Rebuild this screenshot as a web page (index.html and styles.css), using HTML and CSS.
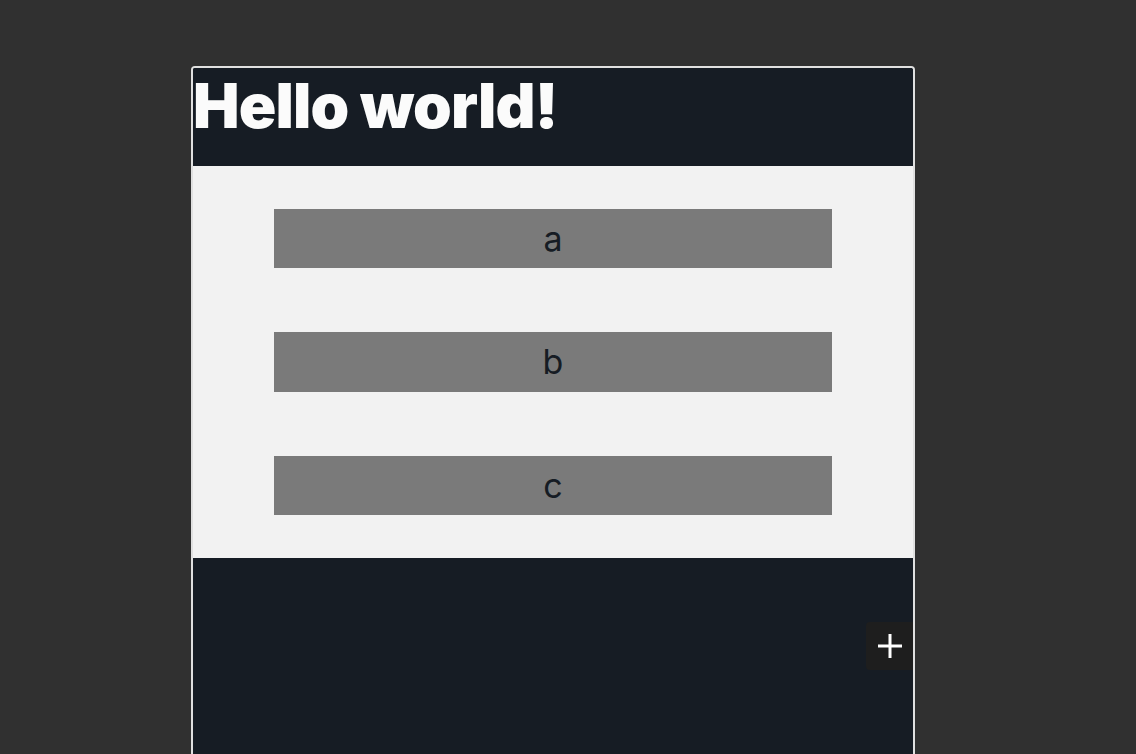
FILE: index.html
```html
<!DOCTYPE html>
<html>
<head>
<meta charset="utf-8">
<link rel="stylesheet" href="styles.css">
</head>
<body>
<div class="frame">
  <header class="top">
    <h1 class="title">Hello world!</h1>
  </header>
  <section class="list">
    <div class="item">a</div>
    <div class="item">b</div>
    <div class="item">c</div>
  </section>
  <section class="bottom">
    <button class="add" aria-label="Add">
      <svg width="26" height="26" viewBox="0 0 26 26"><path d="M13 1v24M1 13h24" stroke="#fff" stroke-width="3" fill="none"/></svg>
    </button>
  </section>
</div>
</body>
</html>
```
FILE: styles.css
```css
html, body {
  margin: 0;
  height: 100%;
  overflow: hidden;
}
body {
  background: #303030;
  font-family: Inter, "Liberation Sans", sans-serif;
  padding: 66px 0 0 191px;
  box-sizing: border-box;
}
.frame {
  width: 720px;
  border: 2px solid #e0e0e0;
  border-radius: 4px;
  border-bottom: none;
  overflow: hidden;
  background: #161c24;
  height: 700px;
  display: flex;
  flex-direction: column;
}
.top {
  background: #161c24;
  height: 98px;
  flex: none;
}
.title {
  margin: 0;
  font-size: 62px;
  font-weight: 900;
  line-height: normal;
  color: #fbfbfb;
  letter-spacing: -0.8px;
}
.list {
  background: #f2f2f2;
  padding: 43px 0;
  display: flex;
  flex-direction: column;
  align-items: center;
  gap: 64px;
  flex: none;
}
.item {
  width: 558px;
  height: 59.33px;
  background: #7a7a7a;
  color: #161c24;
  font-size: 34px;
  display: flex;
  align-items: center;
  justify-content: center;
}
.bottom {
  flex: 1;
  background: #161c24;
  display: flex;
  justify-content: flex-end;
  align-items: flex-start;
  padding-top: 64px;
}
.add {
  width: 47px;
  height: 48px;
  background: #1e1e1e;
  border: none;
  border-radius: 4px 0 0 4px;
  display: flex;
  align-items: center;
  justify-content: center;
  padding: 0;
}
```
